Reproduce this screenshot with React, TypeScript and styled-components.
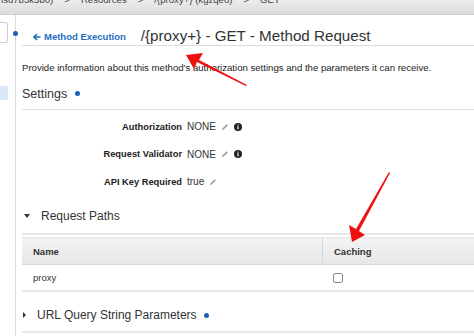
import React from 'react'
import styled, { createGlobalStyle } from 'styled-components'

const GlobalStyle = createGlobalStyle`
  body {
    margin: 0;
    font-family: "Liberation Sans", Arial, sans-serif;
    background: #fff;
  }
`

const Page = styled.div`
  position: relative;
  width: 474px;
  height: 336px;
  overflow: hidden;
  display: flex;
  flex-direction: column;
  color: #222;
`

const TopBar = styled.div`
  height: 14px;
  flex: none;
  background: linear-gradient(#ececec, #dcdcdc);
  border-bottom: 1px solid #cfcfcf;
  overflow: hidden;
  font-size: 9.6px;
  color: #444;
  white-space: nowrap;
`

const Crumbs = styled.div`
  margin-top: -6px;
  margin-left: 1px;
  display: flex;
  gap: 11px;
`

const Body = styled.div`
  flex: 1;
  display: flex;
`

const Sidebar = styled.div`
  position: relative;
  width: 15px;
  flex: none;
  border-right: 1px solid #dadada;
`

const SearchBox = styled.div`
  margin-top: 7px;
  width: 7px;
  height: 19px;
  border: 1px solid #cfcfcf;
  border-left: none;
  border-radius: 0 3px 3px 0;
`

const ActiveItem = styled.div`
  margin-top: 43px;
  width: 8px;
  height: 14px;
  background: #dbe8f7;
`

const Dot = styled.span`
  display: inline-block;
  width: 5px;
  height: 5px;
  border-radius: 50%;
  background: #1b5fb5;
`

const SideDot = styled(Dot)`
  position: absolute;
  top: 16px;
  right: -3px;
`

const Main = styled.div`
  flex: 1;
  padding-left: 6px;
  display: flex;
  flex-direction: column;
`

const Header = styled.div`
  height: 31px;
  box-sizing: border-box;
  display: flex;
  align-items: flex-end;
  padding: 0 0 1px 11px;
  border-bottom: 1px solid #dcdcdc;
`

const BackLink = styled.a`
  display: flex;
  align-items: center;
  gap: 3px;
  color: #1f6dc2;
  font-weight: bold;
  font-size: 9.5px;
  margin: 0 15px 2px 0;
`

const Title = styled.h1`
  margin: 0;
  font-size: 15.2px;
  font-weight: normal;
  color: #333;
`

const Description = styled.p`
  margin: 16px 0 0;
  font-size: 9.6px;
  color: #222;
`

const SectionTitle = styled.h2`
  margin: 9px 0 0;
  height: 23px;
  display: flex;
  align-items: center;
  gap: 8px;
  font-size: 12.5px;
  font-weight: normal;
  color: #333;
  border-bottom: 1px solid #e0e0e0;
  padding-bottom: 4px;
`

const SettingsGrid = styled.div`
  display: grid;
  grid-template-columns: 160px auto;
  column-gap: 5px;
  row-gap: 16.5px;
  margin-top: 11px;
  align-items: center;
`

const Label = styled.div`
  text-align: right;
  font-weight: bold;
  font-size: 9.3px;
  color: #222;
`

const Value = styled.div`
  display: flex;
  align-items: center;
  gap: 5px;
  font-size: 10px;
  color: #333;
`

const Collapsible = styled.div<{ $open?: boolean }>`
  display: flex;
  align-items: center;
  gap: 11px;
  box-sizing: border-box;
  height: ${(p) => (p.$open ? 36 : 41)}px;
  padding: ${(p) => (p.$open ? '0 0 0 2px' : '7px 0 0 1px')};
  margin-top: ${(p) => (p.$open ? 12 : 0)}px;
  font-size: 12px;
  color: #333;
  border-bottom: 2px solid #e8e8e8;
`

const Caret = styled.span<{ $open?: boolean }>`
  width: 0;
  height: 0;
  border-style: solid;
  ${(p) =>
    p.$open
      ? 'border-width: 4px 3.5px 0 3.5px; border-color: #333 transparent transparent transparent;'
      : 'border-width: 3.5px 0 3.5px 3px; border-color: transparent transparent transparent #333;'}
`

const Title2 = styled.span`
  display: flex;
  align-items: center;
  gap: 7px;
`

const Table = styled.div`
  margin-top: 2px;
  font-size: 9.5px;
`

const HeadRow = styled.div`
  display: grid;
  grid-template-columns: 300px 1fr;
  height: 26px;
  background: linear-gradient(#f3f3f3, #e7e7e7);
  border-top: 1px solid #e4e4e4;
  border-bottom: 1px solid #d8d8d8;
`

const HeadCell = styled.div<{ $divider?: boolean }>`
  display: flex;
  align-items: center;
  padding-left: 11px;
  font-weight: bold;
  color: #333;
  ${(p) => (p.$divider ? 'border-left: 1px solid #d6d6d6;' : '')}
`

const Row = styled.div`
  display: grid;
  grid-template-columns: 300px 1fr;
  height: 25px;
  border-bottom: 2px solid #e8e8e8;
`

const Cell = styled.div`
  display: flex;
  align-items: center;
  padding-left: 11px;
  color: #333;
`

const Checkbox = styled.span`
  width: 8px;
  height: 8px;
  border: 1px solid #8a8a8a;
  border-radius: 2px;
  background: #fff;
`

const Arrow = styled.svg`
  position: absolute;
  left: 0;
  top: 0;
  pointer-events: none;
`

const BackIcon = () => (
  <svg width="8" height="8" viewBox="0 0 8 8">
    <path d="M4 1 L1 4 L4 7 M1 4 H7.5" stroke="#1f6dc2" strokeWidth="1.6" fill="none" />
  </svg>
)

const Pencil = () => (
  <svg width="8" height="8" viewBox="0 0 8 8">
    <path d="M1 7 L1.4 5.4 L5.6 1.2 L6.8 2.4 L2.6 6.6 Z" fill="#9a9a9a" />
  </svg>
)

const Info = () => (
  <svg width="8" height="8" viewBox="0 0 8 8">
    <circle cx="4" cy="4" r="4" fill="#222" />
    <rect x="3.4" y="3.3" width="1.2" height="3" fill="#fff" />
    <circle cx="4" cy="2.1" r="0.7" fill="#fff" />
  </svg>
)

export default function App() {
  return (
    <>
      <GlobalStyle />
      <Page>
        <TopBar>
          <Crumbs>
            <span>isu7b3k5b0)</span>
            <span>&gt;</span>
            <span>Resources</span>
            <span>&gt;</span>
            <span>/&#123;proxy+&#125; (kgzqeo)</span>
            <span>&gt;</span>
            <span>GET</span>
          </Crumbs>
        </TopBar>
        <Body>
          <Sidebar>
            <SearchBox />
            <ActiveItem />
            <SideDot />
          </Sidebar>
          <Main>
            <Header>
              <BackLink>
                <BackIcon />
                Method Execution
              </BackLink>
              <Title>/&#123;proxy+&#125; - GET - Method Request</Title>
            </Header>
            <Description>
              Provide information about this method's authorization settings and the parameters it can receive.
            </Description>
            <SectionTitle>
              Settings <Dot />
            </SectionTitle>
            <SettingsGrid>
              <Label>Authorization</Label>
              <Value>
                NONE <Pencil /> <Info />
              </Value>
              <Label>Request Validator</Label>
              <Value>
                NONE <Pencil /> <Info />
              </Value>
              <Label>API Key Required</Label>
              <Value>
                true <Pencil />
              </Value>
            </SettingsGrid>
            <Collapsible $open>
              <Caret $open />
              Request Paths
            </Collapsible>
            <Table>
              <HeadRow>
                <HeadCell>Name</HeadCell>
                <HeadCell $divider>Caching</HeadCell>
              </HeadRow>
              <Row>
                <Cell>proxy</Cell>
                <Cell>
                  <Checkbox />
                </Cell>
              </Row>
            </Table>
            <Collapsible>
              <Caret />
              <Title2>
                URL Query String Parameters <Dot />
              </Title2>
            </Collapsible>
          </Main>
        </Body>
        <Arrow width="474" height="336">
          <polygon points="186,55 203,53 199,60 247,85 246,86 197,62 194,69" fill="#ee1111" />
          <polygon points="352,242 349,225 356,229 389,172 390,173 359,231 365,235" fill="#ee1111" />
        </Arrow>
      </Page>
    </>
  )
}
